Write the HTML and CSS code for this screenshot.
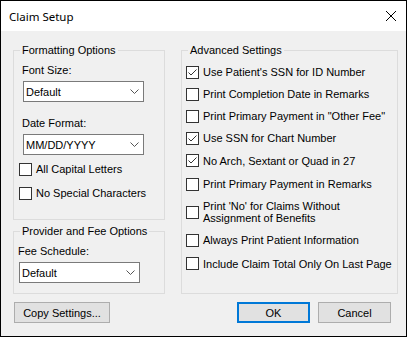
FILE: index.html
```html
<!DOCTYPE html>
<html>
<head>
<meta charset="utf-8">
<link rel="stylesheet" href="styles.css">
</head>
<body>
<div class="window">
  <div class="titlebar">
    <span class="title">Claim Setup</span>
    <svg class="close" width="12" height="12" viewBox="0 0 12 12"><path d="M1 1 L11 11 M11 1 L1 11" stroke="#000" stroke-width="1" fill="none"/></svg>
  </div>
  <div class="content">
    <div class="panels">
      <div class="col-left">
        <div class="group formatting">
          <div class="legend">Formatting Options</div>
          <div class="label first">Font Size:</div>
          <div class="combo"><span>Default</span><svg width="9" height="5" viewBox="0 0 9 5"><polyline points="0.5,0.5 4.5,4.5 8.5,0.5" stroke="#555" fill="none"/></svg></div>
          <div class="label second">Date Format:</div>
          <div class="combo"><span>MM/DD/YYYY</span><svg width="9" height="5" viewBox="0 0 9 5"><polyline points="0.5,0.5 4.5,4.5 8.5,0.5" stroke="#555" fill="none"/></svg></div>
          <div class="checks-left">
            <div class="check"><span class="box"></span><span>All Capital Letters</span></div>
            <div class="check"><span class="box"></span><span>No Special Characters</span></div>
          </div>
        </div>
        <div class="group provider">
          <div class="legend">Provider and Fee Options</div>
          <div class="label first">Fee Schedule:</div>
          <div class="combo"><span>Default</span><svg width="9" height="5" viewBox="0 0 9 5"><polyline points="0.5,0.5 4.5,4.5 8.5,0.5" stroke="#555" fill="none"/></svg></div>
        </div>
      </div>
      <div class="group advanced">
        <div class="legend">Advanced Settings</div>
        <div class="checks-right">
          <div class="check"><span class="box"><svg width="11" height="11" viewBox="0 0 11 11"><polyline points="1.5,5.5 4,8 9.5,2.5" stroke="#333" fill="none"/></svg></span><span>Use Patient's SSN for ID Number</span></div>
          <div class="check"><span class="box"></span><span>Print Completion Date in Remarks</span></div>
          <div class="check"><span class="box"></span><span>Print Primary Payment in "Other Fee"</span></div>
          <div class="check"><span class="box"><svg width="11" height="11" viewBox="0 0 11 11"><polyline points="1.5,5.5 4,8 9.5,2.5" stroke="#333" fill="none"/></svg></span><span>Use SSN for Chart Number</span></div>
          <div class="check"><span class="box"><svg width="11" height="11" viewBox="0 0 11 11"><polyline points="1.5,5.5 4,8 9.5,2.5" stroke="#333" fill="none"/></svg></span><span>No Arch, Sextant or Quad in 27</span></div>
          <div class="check"><span class="box"></span><span>Print Primary Payment in Remarks</span></div>
          <div class="check two-line"><span class="box"></span><span>Print 'No' for Claims Without<br>Assignment of Benefits</span></div>
          <div class="check"><span class="box"></span><span>Always Print Patient Information</span></div>
          <div class="check"><span class="box"></span><span>Include Claim Total Only On Last Page</span></div>
        </div>
      </div>
    </div>
    <div class="actions">
      <button class="btn copy">Copy Settings...</button>
      <button class="btn ok">OK</button>
      <button class="btn cancel">Cancel</button>
    </div>
  </div>
</div>
</body>
</html>
```
FILE: styles.css
```css
html, body {
  margin: 0;
  padding: 0;
}
body {
  width: 407px;
  height: 337px;
  overflow: hidden;
  font-family: "Liberation Sans", Arial, sans-serif;
  font-size: 11px;
  color: #000;
}
.window {
  width: 407px;
  height: 337px;
  box-sizing: border-box;
  border: 1px solid #000;
  display: flex;
  flex-direction: column;
  background: #f0f0f0;
}
.titlebar {
  height: 30px;
  flex: none;
  background: #fff;
  display: flex;
  align-items: center;
  justify-content: space-between;
  padding: 0 8px 0 8px;
}
.title {
  font-family: "Noto Sans", "Open Sans", sans-serif;
  font-size: 11.5px;
  line-height: 16px;
  margin-top: 1px;
}
.close {
  display: block;
  margin-right: 1px;
  margin-top: -1px;
}
.content {
  flex: 1;
  display: flex;
  flex-direction: column;
  padding: 19px 8px 0 12px;
}
.panels {
  display: grid;
  grid-template-columns: 152px 217px;
  column-gap: 16px;
}
.col-left {
  display: flex;
  flex-direction: column;
  gap: 11px;
}
.group {
  box-sizing: border-box;
  border: 1px solid #dcdcdc;
  display: flex;
  flex-direction: column;
  align-items: flex-start;
}
.formatting {
  height: 170px;
  padding-left: 8px;
}
.provider {
  height: 63px;
  padding-left: 4px;
}
.advanced {
  height: 244px;
  align-items: stretch;
}
.legend {
  margin: -8px 0 0 6px;
  padding: 0 2px;
  background: #f0f0f0;
  line-height: 14px;
  height: 14px;
  white-space: nowrap;
  align-self: flex-start;
}
.formatting .legend {
  margin-left: -2px;
}
.provider .legend {
  margin-left: 2px;
}
.label {
  line-height: 14px;
}
.label.first {
  margin-top: 6px;
}
.label.second {
  margin-top: 14px;
}
.combo {
  box-sizing: border-box;
  width: 121px;
  height: 21px;
  margin-top: 4px;
  margin-left: 1px;
  border: 1px solid #7a7a7a;
  background: #fff;
  display: flex;
  align-items: center;
  justify-content: space-between;
  padding: 0 4px 0 2px;
}
.combo svg {
  display: block;
}
.checks-left {
  margin-top: 2px;
  margin-left: -3px;
  display: grid;
  grid-auto-rows: 24px;
}
.check {
  display: flex;
  align-items: center;
  gap: 4px;
  white-space: nowrap;
  line-height: 12px;
}
.box {
  box-sizing: border-box;
  width: 13px;
  height: 13px;
  flex: none;
  border: 1px solid #333;
  background: #fff;
  display: flex;
  align-items: center;
  justify-content: center;
}
.box svg {
  display: block;
}
.checks-right {
  margin: 4px 0 0 4px;
  display: grid;
  grid-template-rows: 22px 22px 22px 22px 23px 24px 32px 24px 23px;
}
.actions {
  display: flex;
  margin-top: 8px;
  padding-left: 1px;
}
.btn {
  box-sizing: border-box;
  height: 21px;
  margin: 0;
  padding: 0;
  font-family: "Liberation Sans", Arial, sans-serif;
  font-size: 11px;
  color: #000;
  background: #e1e1e1;
  border: 1px solid #adadad;
}
.copy {
  width: 96px;
}
.ok {
  width: 73px;
  margin-left: auto;
  border: 2px solid #0078d7;
}
.cancel {
  width: 73px;
  margin-left: 8px;
  margin-right: 7px;
}
```
